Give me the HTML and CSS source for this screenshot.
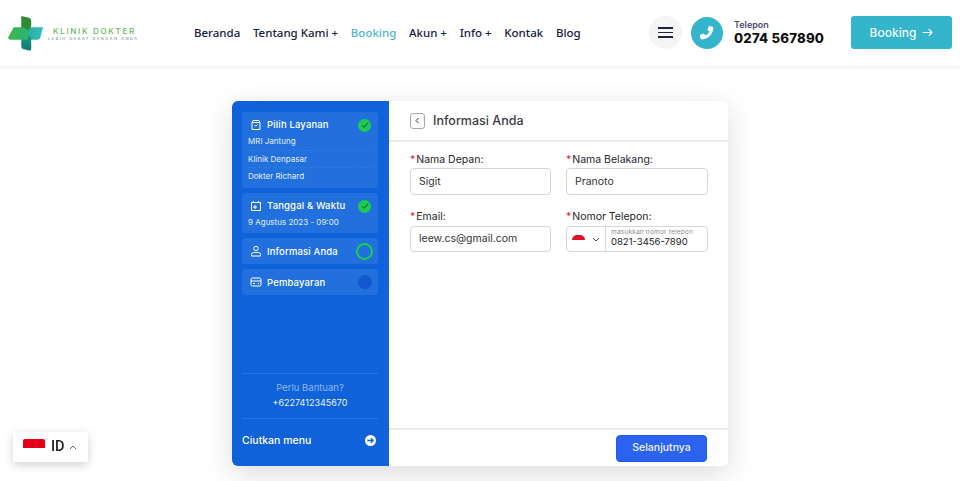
FILE: index.html
```html
<!DOCTYPE html>
<html lang="id">
<head>
<meta charset="utf-8">
<title>Klinik Dokter</title>
<link rel="stylesheet" href="styles.css">
</head>
<body>
<header class="topbar">
  <a class="logo">
    <svg class="logo-mark" width="36" height="38" viewBox="0 0 38 38">
      <defs>
        <linearGradient id="lg1" x1="0" y1="0" x2="1" y2="0"><stop offset="0" stop-color="#3fb54a"/><stop offset="1" stop-color="#2bb673"/></linearGradient>
        <linearGradient id="lg2" x1="0" y1="0" x2="1" y2="0"><stop offset="0" stop-color="#2aa88f"/><stop offset="1" stop-color="#35bcc0"/></linearGradient>
        <linearGradient id="lg3" x1="0" y1="0" x2="0" y2="1"><stop offset="0" stop-color="#1f9d8b"/><stop offset="1" stop-color="#0f7a73"/></linearGradient>
      </defs>
      <path d="M14 13 H37 L34 24 Q33.500 26 31 26 H14 Z" fill="url(#lg2)"/>
      <path d="M14 19 Q20 21 24.500 24 V36 Q24.500 38 22 37.500 L16 36 Q14 35.500 14 33 Z" fill="url(#lg3)"/>
      <path d="M14 1 L22 3 Q24.500 3.500 24.500 6 V12 Q22 18 14 19 Z" fill="#2e8b2f"/>
      <path d="M6 13 H14 Q21 13 21 20 V26 H3 Q0.500 26 0 24 Z" fill="url(#lg1)"/>
    </svg>
    <span class="logo-text">
      <span class="logo-name">KLINIK DOKTER</span>
      <span class="logo-tag">LEBIH DEKAT DENGAN ANDA</span>
    </span>
  </a>
  <nav class="menu">
    <a>Beranda</a>
    <a>Tentang Kami +</a>
    <a class="is-active">Booking</a>
    <a>Akun +</a>
    <a>Info +</a>
    <a>Kontak</a>
    <a>Blog</a>
  </nav>
  <div class="tools">
    <button class="burger" aria-label="Menu"><span></span><span></span><span></span></button>
    <span class="phone-icon">
      <svg width="16" height="16" viewBox="0 0 24 24"><path fill="#fff" d="M20.500 2.500 16 1.500c-.6-.1-1.100.2-1.300.7l-1.800 4.300c-.2.500 0 1 .4 1.300l2.300 1.900c-1.200 2.700-3.300 4.800-6 6l-1.900-2.300c-.3-.4-.8-.6-1.300-.4l-4.300 1.800c-.5.2-.8.800-.7 1.300l1 4.500c.1.500.6.900 1.100.9C13.400 21.500 21.500 13.400 21.500 3.600c0-.5-.4-1-1-1.100z"/></svg>
    </span>
    <div class="phone-info">
      <span class="phone-label">Telepon</span>
      <span class="phone-number">0274 567890</span>
    </div>
    <a class="cta">Booking
      <svg width="11" height="9" viewBox="0 0 13 11"><path d="M0.500 5.500H12M8 1.500l4 4-4 4" fill="none" stroke="#fff" stroke-width="1.300"/></svg>
    </a>
  </div>
</header>

<main class="page">
  <section class="wizard">
    <aside class="side">
      <div class="steps">
        <div class="step step-first">
          <div class="step-head">
            <svg class="step-icon" width="12" height="12" viewBox="0 0 12 12"><path d="M2 3.500h8v7H2zM3 1.500h6l1 2H2zM4.500 6l1.200 1.200L7.700 5.500" fill="none" stroke="#fff" stroke-width="1"/></svg>
            <span class="step-title">Pilih Layanan</span>
            <span class="status done"><svg width="8" height="8" viewBox="0 0 8 8"><path d="M1 4.200l2 2L7 2" fill="none" stroke="#0d7f3a" stroke-width="1.200"/></svg></span>
          </div>
          <ul class="picked">
            <li>MRI Jantung</li>
            <li>Klinik Denpasar</li>
            <li>Dokter Richard</li>
          </ul>
        </div>
        <div class="step step-second">
          <div class="step-head">
            <svg class="step-icon" width="12" height="12" viewBox="0 0 12 12"><path d="M1.500 2.500h9v8h-9zM3.500 1v2M8.500 1v2M4 6h2v2H4z" fill="none" stroke="#fff" stroke-width="1"/></svg>
            <span class="step-title">Tanggal &amp; Waktu</span>
            <span class="status done"><svg width="8" height="8" viewBox="0 0 8 8"><path d="M1 4.200l2 2L7 2" fill="none" stroke="#0d7f3a" stroke-width="1.200"/></svg></span>
          </div>
          <p class="when">9 Agustus 2023 - 09:00</p>
        </div>
        <div class="step step-plain">
          <div class="step-head">
            <svg class="step-icon" width="12" height="12" viewBox="0 0 12 12"><circle cx="6" cy="3.500" r="2.200" fill="none" stroke="#fff"/><path d="M1.500 11V9.500Q1.500 7.500 3.500 7.500h5q2 0 2 2V11z" fill="none" stroke="#fff"/></svg>
            <span class="step-title">Informasi Anda</span>
            <span class="status current"></span>
          </div>
        </div>
        <div class="step step-plain">
          <div class="step-head">
            <svg class="step-icon" width="12" height="12" viewBox="0 0 12 12"><rect x="1" y="2" width="10" height="8" rx="1.500" fill="none" stroke="#fff"/><path d="M1 5h10M3 7.500h2M8 7.500h1" fill="none" stroke="#fff"/></svg>
            <span class="step-title">Pembayaran</span>
            <span class="status todo"></span>
          </div>
        </div>
      </div>
      <div class="help">
        <p class="help-label">Perlu Bantuan?</p>
        <p class="help-phone">+6227412345670</p>
      </div>
      <div class="collapse">
        <span>Ciutkan menu</span>
        <span class="collapse-btn"><svg width="7" height="7" viewBox="0 0 8 8"><path d="M0.500 4H7M4.500 1.500L7 4 4.500 6.500" fill="none" stroke="#0f62d9" stroke-width="1.500"/></svg></span>
      </div>
    </aside>
    <div class="panel">
      <div class="panel-head">
        <span class="back"><svg width="7" height="7" viewBox="0 0 7 7"><path d="M4.500 1L2 3.500 4.500 6" fill="none" stroke="#333" stroke-width="1"/></svg></span>
        <h1>Informasi Anda</h1>
      </div>
      <form class="form">
        <div class="field">
          <label><i>*</i>Nama Depan:</label>
          <div class="input">Sigit</div>
        </div>
        <div class="field">
          <label><i>*</i>Nama Belakang:</label>
          <div class="input">Pranoto</div>
        </div>
        <div class="field">
          <label><i>*</i>Email:</label>
          <div class="input short">leew.cs@gmail.com</div>
        </div>
        <div class="field">
          <label><i>*</i>Nomor Telepon:</label>
          <div class="input short tel">
            <span class="country">
              <span class="flag-sm"></span>
              <svg width="8" height="5" viewBox="0 0 8 5"><path d="M1 1l3 3 3-3" fill="none" stroke="#444" stroke-width="1"/></svg>
            </span>
            <span class="tel-value">
              <small>masukkan nomor telepon</small>
              <span>0821-3456-7890</span>
            </span>
          </div>
        </div>
      </form>
      <div class="panel-foot">
        <button class="next" type="button">Selanjutnya</button>
      </div>
    </div>
  </section>
</main>

<div class="lang">
  <span class="flag-lg"></span>
  <span class="lang-code">ID</span>
  <svg width="8" height="5" viewBox="0 0 8 5"><path d="M1 4l3-3 3 3" fill="none" stroke="#666" stroke-width="1"/></svg>
</div>
</body>
</html>
```

FILE: styles.css
```css
* { box-sizing: border-box; }
html, body { margin: 0; padding: 0; }
body {
  width: 960px;
  height: 481px;
  overflow: hidden;
  background: #fff;
  font-family: "Open Sans", "Liberation Sans", sans-serif;
}
p, ul, h1 { margin: 0; padding: 0; }

/* Header */
.topbar {
  height: 66px;
  display: flex;
  align-items: center;
  background: #fff;
  box-shadow: 0 1px 5px rgba(0, 0, 0, .08);
}
.logo {
  width: 194px;
  display: flex;
  align-items: center;
  padding-left: 8px;
  gap: 4px;
}
.logo-mark { flex: none; }
.logo-text { display: flex; flex-direction: column; padding-top: 2px; }
.logo-name {
  font: 500 8px/9px "Inter", sans-serif;
  letter-spacing: 1.700px;
  color: #66b85c;
  padding-left: 5px;
  white-space: nowrap;
}
.logo-tag {
  font: 400 4px/5px "Inter", sans-serif;
  letter-spacing: 1.500px;
  color: #5b8f72;
  white-space: nowrap;
}
.menu {
  width: 412px;
  display: flex;
  gap: 12.700px;
  font: 500 11.500px/1 "Noto Sans", sans-serif;
  color: #14213d;
  white-space: nowrap;
  padding-bottom: 1px;
}
.menu .is-active { color: #4fb8cf; }
.tools {
  display: flex;
  align-items: center;
  padding-left: 43px;
  padding-bottom: 1px;
}
.burger {
  width: 33px;
  height: 33px;
  margin-left: 0;
  border: 0;
  padding: 0 9px;
  border-radius: 50%;
  background: #f5f5f6;
  display: flex;
  flex-direction: column;
  justify-content: center;
  gap: 3px;
}
.burger span { height: 1.500px; background: #1b2440; display: block; }
.phone-icon {
  width: 32px;
  height: 32px;
  margin-left: 9px;
  border-radius: 50%;
  background: #34b5cb;
  display: flex;
  align-items: center;
  justify-content: center;
}
.phone-info { display: flex; flex-direction: column; margin-left: 11px; width: 117px; }
.phone-label { font: 600 9px/11px "Inter", sans-serif; color: #4d4a70; }
.phone-number { font: 800 13.200px/17px "Inter", sans-serif; color: #111; letter-spacing: .2px; white-space: nowrap; }
.cta {
  width: 101px;
  height: 33px;
  border-radius: 3px;
  background: #34b5cb;
  color: #f2fbfd;
  font: 500 12px/33px "Inter", sans-serif;
  text-align: center;
  display: flex;
  align-items: center;
  justify-content: center;
  gap: 6px;
}

/* Wizard */
.page {
  padding-top: 35px;
  display: flex;
  justify-content: center;
}
.wizard {
  width: 496px;
  height: 365px;
  display: flex;
  border-radius: 6px;
  box-shadow: 0 8px 30px rgba(0, 0, 0, .14);
  font-family: "Inter", sans-serif;
}
.side {
  width: 157px;
  background: #0f62d9;
  border-radius: 6px 0 0 6px;
  padding: 11px 11px 0 10px;
  display: flex;
  flex-direction: column;
  color: #fff;
}
.steps { height: 261px; display: flex; flex-direction: column; gap: 5px; }
.step { background: #2170de; border-radius: 3px; }
.step-first { height: 76px; padding: 0 5px; }
.step-second { height: 40px; padding: 0 5px; }
.step-plain { height: 26px; padding: 0 5px; }
.step-head {
  display: flex;
  align-items: center;
  height: 26px;
  padding-left: 3px;
}
.step-icon { flex: none; margin-right: 5px; }
.step-title { font: 500 9.500px/1 "Inter", sans-serif; letter-spacing: .15px; flex: 1; white-space: nowrap; }
.step-plain .step-title { padding-top: 1px; }
.status {
  width: 13px;
  height: 13px;
  border-radius: 50%;
  flex: none;
  margin-right: 2px;
  display: flex;
  align-items: center;
  justify-content: center;
}
.status.done { background: #1ecb4f; }
.status.current { width: 17px; height: 17px; border: 2px solid #1ecb4f; margin-right: 0; }
.status.todo { width: 14px; height: 14px; background: #1259cf; margin-right: 1px; }
.picked { list-style: none; margin-top: -5px; padding-left: 1px; }
.picked li {
  height: 17.500px;
  font-size: 8px;
  line-height: 17px;
  color: #e4eeff;
  border-bottom: 1px dashed #2f7ae2;
  white-space: nowrap;
}
.picked li:last-child { border-bottom: 0; }
.when { font-size: 8px; line-height: 11px; color: #e4eeff; margin-top: -2px; padding-left: 1px; }
.help {
  height: 46px;
  border-top: 1px solid #2a74de;
  border-bottom: 1px solid #2a74de;
  text-align: center;
  padding-top: 7px;
  font-size: 9px;
}
.help-label { line-height: 14px; font-size: 9.500px; color: #8fb6f2; }
.help-phone { line-height: 14px; margin-top: 1px; color: #eaf2ff; }
.collapse {
  display: flex;
  justify-content: space-between;
  align-items: center;
  height: 43px;
  font-size: 10.500px;
  font-weight: 500;
  padding-right: 2px;
}
.collapse-btn {
  width: 11px;
  height: 11px;
  border-radius: 50%;
  background: #fff;
  display: flex;
  align-items: center;
  justify-content: center;
}

/* Panel */
.panel {
  width: 339px;
  background: #fff;
  border-radius: 0 6px 6px 0;
  display: flex;
  flex-direction: column;
}
.panel-head {
  height: 41px;
  border-bottom: 2px solid #e9e9ec;
  padding-left: 21px;
  display: flex;
  align-items: center;
  gap: 8px;
}
.back {
  width: 15px;
  height: 16px;
  border: 1px solid #a9a9ad;
  border-radius: 3px;
  display: flex;
  align-items: center;
  justify-content: center;
}
h1 { font: 500 12.500px/1 "Inter", sans-serif; color: #3c3c44; padding-top: 1px; }
.form {
  height: 287px;
  padding: 10px 20px 0 21px;
  display: grid;
  grid-template-columns: 141px 142px;
  grid-auto-rows: 57px;
  column-gap: 15px;
}
label { display: block; font-size: 10.500px; line-height: 16px; color: #26262c; white-space: nowrap; }
label i { color: #d9252b; font-style: normal; margin-right: 1px; }
.input {
  height: 27px;
  border: 1px solid #d6d6da;
  border-radius: 4px;
  padding-left: 8px;
  font-size: 10.500px;
  line-height: 25px;
  color: #333;
}
.input.short { height: 26px; margin-top: 1px; line-height: 24px; }
.input.tel { display: flex; padding: 0; }
.country {
  width: 39px;
  border-right: 1px solid #d6d6da;
  display: flex;
  align-items: center;
  padding-left: 5px;
  gap: 7px;
}
.flag-sm {
  width: 13px;
  height: 5px;
  margin-top: -4px;
  background: #e0102a;
  border-radius: 6px 6px 0 0;
}
.tel-value { display: flex; flex-direction: column; padding-left: 5px; }
.tel-value small { font-size: 6.500px; letter-spacing: .2px; line-height: 8px; color: #8a8a90; margin-top: 1px; white-space: nowrap; }
.tel-value span { font-size: 9.500px; line-height: 12px; color: #222; }
.panel-foot {
  flex: 1;
  border-top: 2px solid #e9e9ec;
  margin-top: -1px;
  display: flex;
  justify-content: flex-end;
  align-items: flex-start;
  padding: 5px 21px 0 0;
}
.next {
  width: 91px;
  height: 27px;
  border: 1px solid #1f5ce0;
  border-radius: 4px;
  background: #2b63f0;
  color: #f0f4ff;
  font: 500 10.500px/1 "Inter", sans-serif;
  padding: 0;
}

/* Language switcher */
.lang {
  position: fixed;
  left: 13px;
  top: 432px;
  width: 75px;
  height: 30px;
  background: #fff;
  box-shadow: 0 3px 10px rgba(0, 0, 0, .18);
  display: flex;
  align-items: center;
  padding-left: 10px;
}
.flag-lg { width: 22px; height: 9px; background: #e2001a; border-radius: 2px 2px 0 0; margin-top: -8px; }
.lang-code { font: 500 14.500px/1 "Roboto", sans-serif; color: #222; margin-left: 6px; margin-right: 4px; }
```
